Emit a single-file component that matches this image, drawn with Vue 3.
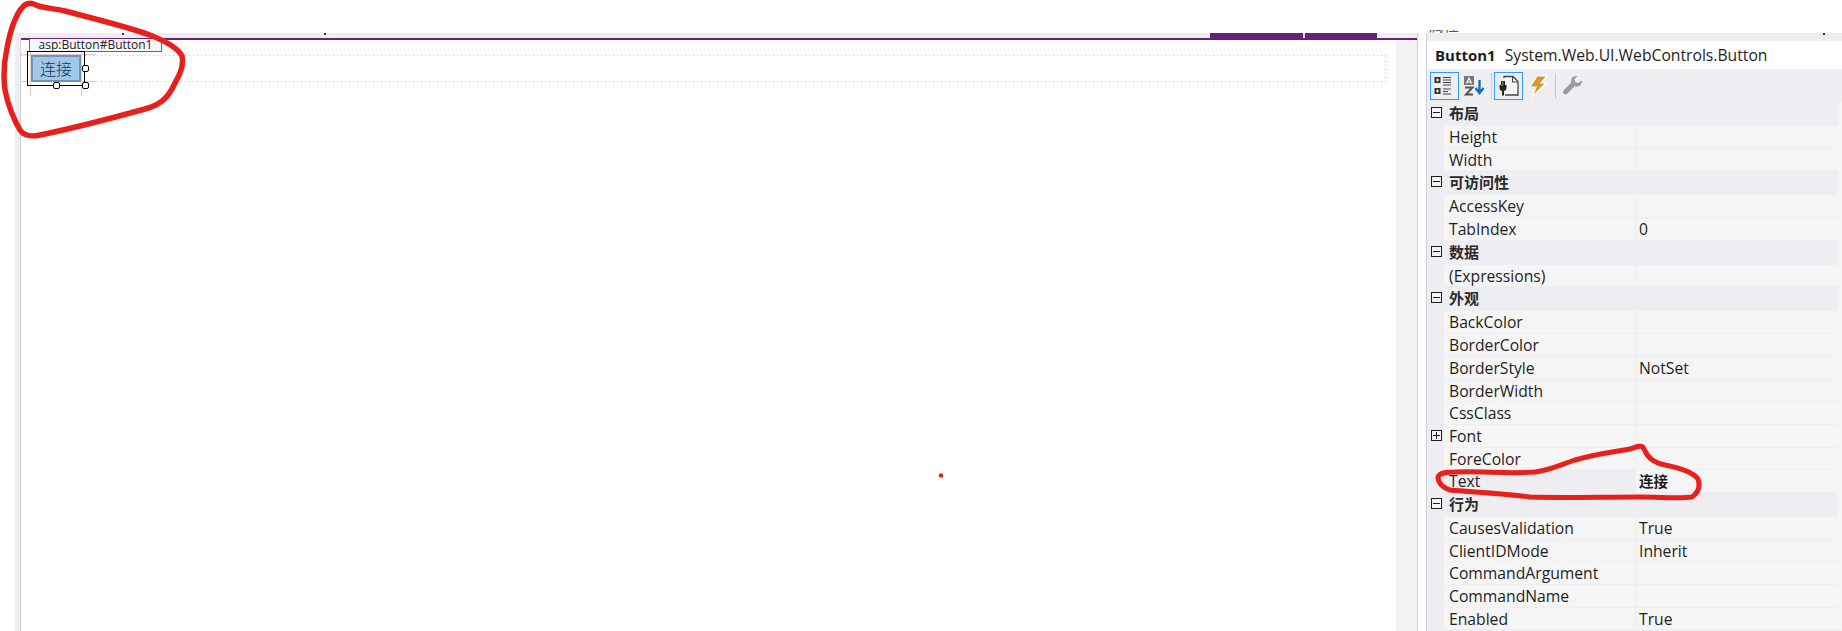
<script setup>
const groups = [
  { name: '布局', rows: [['Height', ''], ['Width', '']] },
  { name: '可访问性', rows: [['AccessKey', ''], ['TabIndex', '0']] },
  { name: '数据', rows: [['(Expressions)', '']] },
  { name: '外观', rows: [['BackColor', ''], ['BorderColor', ''], ['BorderStyle', 'NotSet'], ['BorderWidth', ''], ['CssClass', ''], ['Font', '', 'plus'], ['ForeColor', ''], ['Text', '连接', 'bold']] },
  { name: '行为', rows: [['CausesValidation', 'True'], ['ClientIDMode', 'Inherit'], ['CommandArgument', ''], ['CommandName', ''], ['Enabled', 'True']] },
]
</script>

<template>
  <div class="page">
    <div class="topblank"></div>
    <div class="main">
      <div class="leftblank"></div>
      <section class="editor">
        <div class="tabstrip">
          <i class="mark m1"></i><i class="mark m2"></i>
          <div class="ptab t1"></div>
          <div class="ptab t2"></div>
        </div>
        <div class="designer">
          <div class="surface">
            <div class="dotted"></div>
            <div class="guide gh g1"></div>
            <div class="guide gh g2"></div>
            <div class="guide gv g3"></div>
            <div class="guide gv g4"></div>
            <div class="seltag">asp:Button#Button1</div>
            <div class="selbox"></div>
            <button class="aspbtn">连接</button>
            <i class="handle h1"></i><i class="handle h2"></i><i class="handle h3"></i>
          </div>
          <div class="scroll"></div>
        </div>
      </section>
      <aside class="panel">
        <div class="ptitle"><span class="clipbox"><span class="cliptext">属性</span></span><i class="mark m3"></i></div>
        <div class="objline"><b>Button1</b><span>System.Web.UI.WebControls.Button</span></div>
        <div class="toolbar">
          <span class="tbtn on">
            <svg width="24" height="24" viewBox="0 0 24 24">
              <rect x="1.5" y="3" width="6" height="6" fill="#333"/><path d="M3 6h3M4.500 4.500v3" stroke="#fff"/>
              <rect x="1.500" y="14" width="6" height="6" fill="#333"/><path d="M3 17h3M4.500 15.500v3" stroke="#fff"/>
              <path d="M10 3.500h8M10 6h8M10 8.500h8M10 11h8M10 15h8M10 17.500h5M10 20h8" stroke="#444" stroke-width="1.100"/>
            </svg>
          </span>
          <span class="tbtn">
            <svg width="24" height="24" viewBox="0 0 24 24">
              <rect x="2" y="2" width="10" height="9" fill="#777"/><path d="M4.500 9.500 7 4l2.500 5.500M5.500 8h3" stroke="#fff" fill="none" stroke-width="1.100"/>
              <path d="M3 13.500h7.500L4 20.500h7" stroke="#555" stroke-width="2" fill="none"/>
              <path d="M17.500 6v12M13.500 14l4 5 4-5" stroke="#0e70c0" stroke-width="2.400" fill="none"/>
            </svg>
          </span>
          <span class="tsep"></span>
          <span class="tbtn on">
            <svg width="24" height="24" viewBox="0 0 24 24">
              <path d="M7 4V2.500h9l5 5V21H8" fill="#f5f5f5" stroke="#444" stroke-width="1.300"/>
              <path d="M15.500 3v5h5" fill="none" stroke="#444" stroke-width="1.100"/>
              <path d="M4 7v4.500h1.700V7zm4 0v4.500H6.200V7zM2.500 11h7v2.500a3.500 3.500 0 0 1-7 0zM5 16h2v5.500H5z" fill="#222"/>
            </svg>
          </span>
          <span class="tbtn">
            <svg width="24" height="24" viewBox="0 0 24 24">
              <path d="M11 2h10l-6 7h5L6 23l4-10H4z" fill="#d29a34" stroke="#fff" stroke-width="1.200"/>
            </svg>
          </span>
          <span class="tsep"></span>
          <span class="tbtn">
            <svg width="24" height="24" viewBox="0 0 24 24">
              <path d="M21 6.500a5.500 5.500 0 0 1-7.500 5.700L6 20a2.500 2.500 0 0 1-3.500-3.500l7.600-7.700A5.500 5.500 0 0 1 16.500 2l-3 3 .7 3.200 3.300.8z" fill="#9a9a9a"/>
            </svg>
          </span>
        </div>
        <div class="grid">
          <template v-for="g in groups" :key="g.name">
            <div class="cat"><span class="box minus"></span><b>{{ g.name }}</b></div>
            <div v-for="r in g.rows" :key="r[0]" class="row" :class="{ picked: r[2] === 'bold' }">
              <span v-if="r[2] === 'plus'" class="box plus"></span>
              <span class="nm">{{ r[0] }}</span>
              <span class="vl" :class="{ strong: r[2] === 'bold' }">{{ r[1] }}</span>
            </div>
          </template>
        </div>
      </aside>
    </div>
    <svg class="ink" width="1842" height="631" viewBox="0 0 1842 631" fill="none">
      <path d="M36 5C30 2 25 3 21 9C15 17 10 32 7 48C4 62 3 75 5 90C8 106 15 122 20 130C24 136 30 137 40 135C65 130 105 120 145 109C160 105 168 98 174 85C180 74 184 66 182 56C178 48 165 41 150 35C125 26 95 19 65 11C52 8 42 8 36 5Z" stroke="#e8201c" stroke-width="5.500" stroke-linejoin="round"/>
      <path d="M1643 447C1640 445 1636 447 1630 449C1612 452 1595 454 1575 460C1560 465 1550 470 1535 472C1510 474 1480 471 1455 472C1445 472 1440 473 1438 477C1438 483 1443 488 1450 490C1470 492 1500 493 1530 497C1560 498 1600 497 1640 497C1660 497 1680 499 1692 497C1699 492 1700 485 1698 479C1693 472 1680 468 1665 465C1655 463 1648 458 1645 451Z" stroke="#e8201c" stroke-width="5" stroke-linejoin="round"/>
      <circle cx="941" cy="475.500" r="2.300" fill="#e8201c"/>
    </svg>
  </div>
</template>

<style>
html, body { margin: 0; background: #fff; overflow: hidden; }
</style>

<style scoped>
.page {
  position: relative;
  width: 1842px;
  height: 631px;
  overflow: hidden;
  display: flex;
  flex-direction: column;
  background: #fff;
  font-family: "Open Sans", "Noto Sans CJK SC", sans-serif;
  color: #1e1e1e;
}
.topblank { height: 33px; flex: none; }
.main { flex: 1; display: flex; min-height: 0; }
.leftblank { width: 15px; flex: none; }
.editor { width: 1402px; flex: none; display: flex; flex-direction: column; background: #eeeef2; border-right: 1px solid #cfcfdc; }
.tabstrip { height: 7px; flex: none; position: relative; }
.tabstrip::after { content: ""; position: absolute; left: 6px; right: 0; bottom: 0; height: 2px; background: #68217a; }
.mark { position: absolute; top: 0; width: 2px; height: 2px; background: #4a3418; }
.m1 { left: 107px; }
.m2 { left: 309px; }
.m3 { left: 396px; }
.ptab { position: absolute; top: 0; height: 5px; background: #68217a; }
.t1 { left: 1195px; width: 93px; }
.t2 { left: 1290px; width: 72px; }
.designer { flex: 1; display: flex; margin-left: 5px; border-left: 1px solid #cfd0de; min-height: 0; }
.surface { flex: 1; position: relative; background: #fff; padding: 15px 10px 0 0; }
.scroll { width: 21px; flex: none; background: #f3f3f5; }
.dotted {
  height: 27px;
  background:
    repeating-linear-gradient(90deg, #c6c6c6 0 1px, transparent 1px 4px) left top / 100% 1px no-repeat,
    repeating-linear-gradient(90deg, #c6c6c6 0 1px, transparent 1px 4px) left bottom / 100% 1px no-repeat,
    repeating-linear-gradient(0deg, #c6c6c6 0 1px, transparent 1px 4px) right top / 1px 100% no-repeat;
}
.guide { position: absolute; background: #e5c9c9; }
.gh { left: 0; width: 75px; height: 1px; }
.g1 { top: 14px; }
.g2 { top: 41px; }
.gv { top: 11px; width: 1px; height: 45px; }
.g3 { left: 9px; }
.g4 { left: 60px; }
.seltag {
  position: absolute; left: 8px; top: -1px; width: 131px; height: 12px;
  border: 1px solid #3d6fb6; border-top: 0; background: #f7f7f7;
  font-size: 12px; line-height: 11px; text-align: center; color: #222;
}
.selbox { position: absolute; left: 6px; top: 11px; width: 56px; height: 33px; border: 1px solid #000; }
.aspbtn {
  position: absolute; left: 10px; top: 15px; width: 50px; height: 27px; padding: 0;
  background: #9fc7ea; border: 2px solid #6f95b5; color: #16304d;
  font-family: "Noto Sans CJK SC", sans-serif; font-size: 16px; line-height: 23px; font-weight: 300;
}
.handle { position: absolute; width: 5px; height: 5px; border: 1px solid #000; border-radius: 2px; background: #fff; }
.h1 { left: 61px; top: 25px; }
.h2 { left: 32px; top: 42px; }
.h3 { left: 61px; top: 42px; }

.panel { flex: 1; min-width: 0; position: relative; display: flex; flex-direction: column; background: #eeeef2; margin-left: 8px; border-left: 1px solid #cfcfdc; }
.ptitle { height: 8px; flex: none; position: relative; }
.clipbox { position: absolute; left: 2px; top: -3px; width: 40px; height: 3px; overflow: hidden; }
.cliptext { position: absolute; left: 0; top: -13px; font-size: 15px; line-height: 16px; color: #555; font-family: "Noto Sans CJK SC", sans-serif; }
.objline { height: 28px; flex: none; background: #fff; display: flex; align-items: center; gap: 9px; padding-left: 8px; font-size: 15.700px; white-space: nowrap; }
.objline b { font-weight: 700; font-size: 15px; }
.toolbar { height: 33px; flex: none; display: flex; align-items: center; padding-left: 3px; }
.tbtn { width: 29px; height: 28px; box-sizing: border-box; display: flex; align-items: center; justify-content: center; }
.tbtn.on { border: 1px solid #3399ff; }
.tsep { width: 1px; height: 26px; background: #c9c9d4; margin: 0 2px 0 3px; }
.grid { display: flex; flex-direction: column; background: #f5f5f5; padding-right: 4px; }
.cat { height: 24px; box-sizing: border-box; padding-bottom: 3px; flex: none; display: flex; align-items: center; position: relative; padding-left: 22px; background: #eeeef2; }
.cat b { font-family: "Noto Sans CJK SC", sans-serif; font-weight: 700; font-size: 15px; color: #2a2a2a; }
.row { height: 22.700px; flex: none; position: relative; display: flex; align-items: stretch; background: #f5f5f5; box-shadow: -17px 0 0 #eeeef2, inset 0 -1px 0 #eeeef2; margin-left: 17px; font-size: 15.700px; line-height: 22px; }
.nm { width: 192px; box-sizing: border-box; padding-left: 5px; border-right: 1px solid #eeeef2; flex: none; }
.vl { flex: 1; padding-left: 3px; }
.vl.strong { font-weight: 700; font-family: "Noto Sans CJK SC", sans-serif; font-size: 14.500px; }
.picked .nm { background: #eeeef2; }
.box { position: absolute; left: 4px; top: 5px; width: 9px; height: 9px; border: 1px solid #1e1e1e; background: #f5f5f5; }
.box::before { content: ""; position: absolute; left: 1px; right: 1px; top: 4px; height: 1px; background: #1e1e1e; }
.plus::after { content: ""; position: absolute; top: 1px; bottom: 1px; left: 4px; width: 1px; background: #1e1e1e; }
.row .plus { left: -13px; top: 5px; }
.ink { position: absolute; left: 0; top: 0; pointer-events: none; }
</style>
